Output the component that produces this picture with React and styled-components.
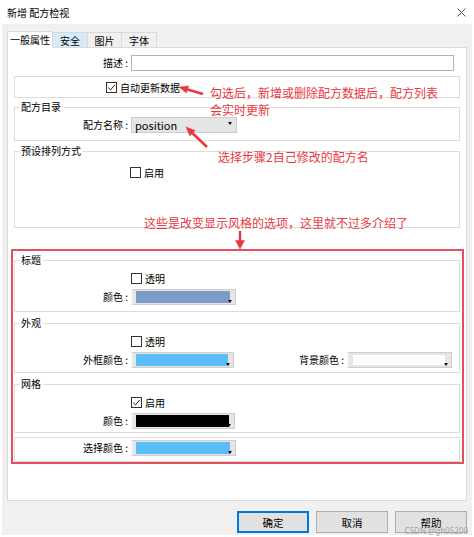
import React from 'react';
import styled, { createGlobalStyle } from 'styled-components';

const GlobalStyle = createGlobalStyle`
  html, body { margin: 0; padding: 0; background: #fff; }
  body { font-family: "Noto Sans CJK SC", "Noto Sans", sans-serif; }
  * { box-sizing: border-box; }
`;

const Window = styled.div`
  position: relative;
  width: 474px;
  height: 537px;
  background: #fff;
  display: flex;
  flex-direction: column;
  overflow: hidden;
  font-size: 10px;
  color: #000;
`;

const TitleBar = styled.div`
  flex: none;
  height: 24px;
  display: flex;
  align-items: center;
  justify-content: space-between;
  padding: 0 8px 0 7px;
  font-size: 10px;
`;

const Body = styled.div`
  flex: 1;
  margin: 0 2px 2px 2px;
  background: #f0f0f0;
  padding: 7px 5px 0 5px;
  display: flex;
  flex-direction: column;
`;

const TabStrip = styled.div`
  display: flex;
  align-items: flex-end;
  height: 16px;
`;

const Tab = styled.div`
  width: ${p => p.$w}px;
  height: ${p => (p.$active ? 17 : 15)}px;
  margin-bottom: ${p => (p.$active ? -1 : 0)}px;
  margin-left: -1px;
  position: relative;
  z-index: ${p => (p.$active ? 1 : 0)};
  display: flex;
  align-items: center;
  justify-content: center;
  padding-bottom: ${p => (p.$active ? 2 : 0)}px;
  font-size: 10px;
  background: ${p => (p.$active ? '#fff' : p.$hover ? '#d9eaf8' : '#f0f0f0')};
  border: 1px solid ${p => (p.$active ? '#dadada' : p.$hover ? '#c6dcf0' : '#d9d9d9')};
  border-bottom: none;
  &:first-child { margin-left: 0; }
`;

const Panel = styled.div`
  height: 454px;
  background: #fff;
  border: 1px solid #dadada;
  padding: 0 6px;
  display: flex;
  flex-direction: column;
`;

const Row = styled.div`
  display: flex;
  align-items: center;
  height: 16px;
  margin-top: ${p => p.$mt || 0}px;
  padding-right: ${p => p.$pr || 0}px;
`;

const Label = styled.span`
  flex: none;
  width: ${p => p.$w}px;
  padding-right: 3px;
  text-align: right;
  white-space: nowrap;
  font-size: 10px;
  line-height: 16px;
`;

const TextInput = styled.div`
  flex: 1;
  height: 16px;
  border: 1px solid #b4b4b4;
  background: #fff;
`;

const Box = styled.div`
  border: 1px solid #dcdcdc;
  margin-top: ${p => p.$mt || 0}px;
  padding: ${p => p.$pad};
`;

const Group = styled.fieldset`
  margin: ${p => p.$mt || 0}px 0 0 0;
  border: 1px solid #dcdcdc;
  padding: ${p => p.$pad};
  min-width: 0;
  display: flex;
  flex-direction: column;
  gap: 5px;
`;

const Legend = styled.legend`
  margin-left: 4px;
  padding: 0 2px;
  font-size: 10px;
  line-height: 12px;
`;

const CheckRow = styled.label`
  display: flex;
  align-items: center;
  gap: 3px;
  height: 12px;
  padding-left: ${p => p.$pl}px;
  font-size: 10px;
`;

const CheckBox = styled.span`
  width: 11px;
  height: 11px;
  border: 1px solid #333;
  background: #fff;
  display: flex;
  align-items: center;
  justify-content: center;
`;

const Combo = styled.div`
  position: relative;
  width: 106px;
  height: 16px;
  background: #e5e5e5;
  border: 1px solid #cbcbcb;
  padding-left: 3px;
  display: flex;
  align-items: center;
  font-size: 11px;
`;

const ColorCombo = styled.div`
  position: relative;
  width: ${p => p.$w || 105}px;
  height: 16px;
  background: #e6e6e6;
  border: 1px solid #cdcdcd;
  border-left: 2px solid #f4f4f4;
  padding: 1px 5px 1px 3px;
  display: flex;
`;

const Swatch = styled.div`
  flex: 1;
  background: ${p => p.$c};
  border: ${p => (p.$c === '#ffffff' ? '1px solid #e4e4e4' : 'none')};
`;

const Caret = styled.span`
  position: absolute;
  right: ${p => p.$r}px;
  bottom: ${p => p.$b}px;
  width: 0;
  height: 0;
  border-left: 2px solid transparent;
  border-right: 2px solid transparent;
  border-top: 3px solid #111;
`;

const Highlight = styled.div`
  margin: 21px -4px 0 -3px;
  border: 2px solid #e4505e;
  padding: 3px 2px 0 1px;
  display: flex;
  flex-direction: column;
`;

const Footer = styled.div`
  display: flex;
  justify-content: flex-end;
  gap: 7px;
  margin-top: 10px;
`;

const Button = styled.div`
  width: 72px;
  height: 22px;
  display: flex;
  align-items: center;
  justify-content: center;
  background: #e1e1e1;
  border: 1px solid ${p => (p.$default ? '#0078d7' : '#adadad')};
  box-shadow: ${p => (p.$default ? 'inset 0 0 0 1px #0078d7' : 'none')};
  font-size: 10.5px;
  line-height: 11px;
`;

const Overlay = styled.div`
  position: absolute;
  inset: 0;
  pointer-events: none;
`;

const Note = styled.div`
  position: absolute;
  left: ${p => p.$x}px;
  top: ${p => p.$y}px;
  color: #e8383f;
  font-size: 12px;
  line-height: 17px;
  white-space: nowrap;
`;

const Watermark = styled.div`
  position: absolute;
  right: 6px;
  top: 527px;
  font-family: "Noto Sans", sans-serif;
  font-size: 8px;
  line-height: 8px;
  color: rgba(140, 140, 140, 0.75);
  white-space: nowrap;
`;

const Check = ({ checked }) => (
  <CheckBox>
    {checked && (
      <svg width="9" height="9" viewBox="0 0 9 9">
        <path d="M1.2 4.6 L3.5 6.9 L7.9 1.8" fill="none" stroke="#222" strokeWidth="1" />
      </svg>
    )}
  </CheckBox>
);

const Checkbox = ({ checked, pl, children }) => (
  <CheckRow $pl={pl}>
    <Check checked={checked} />
    {children}
  </CheckRow>
);

const ColorPicker = ({ color, w }) => (
  <ColorCombo $w={w}>
    <Swatch $c={color} />
    <Caret $r={3} $b={1} />
  </ColorCombo>
);

const tabs = [
  { name: '一般属性', w: 46, active: true },
  { name: '安全', w: 36, hover: true },
  { name: '图片', w: 35 },
  { name: '字体', w: 36 },
];

export default function App() {
  return (
    <>
      <GlobalStyle />
      <Window>
        <TitleBar>
          <span>新增 配方检视</span>
          <svg width="9" height="9" viewBox="0 0 9 9">
            <path d="M0.5 0.5 L8.5 8.5 M8.5 0.5 L0.5 8.5" stroke="#444" strokeWidth="0.9" />
          </svg>
        </TitleBar>
        <Body>
          <TabStrip>
            {tabs.map(t => (
              <Tab key={t.name} $w={t.w} $active={t.active} $hover={t.hover}>
                {t.name}
              </Tab>
            ))}
          </TabStrip>
          <Panel>
            <Row $mt={7} $pr={6}>
              <Label $w={117}>描述 :</Label>
              <TextInput />
            </Row>

            <Box $mt={5} $pad="4px 0">
              <Checkbox checked pl={91}>自动更新数据</Checkbox>
            </Box>

            <Group $mt={3} $pad="4px 0 7px 0">
              <Legend>配方目录</Legend>
              <Row>
                <Label $w={116}>配方名称 :</Label>
                <Combo>
                  position
                  <Caret $r={4} $b={7} />
                </Combo>
              </Row>
            </Group>

            <Group $mt={4} $pad="9px 0 49px 0">
              <Legend>预设排列方式</Legend>
              <Checkbox pl={115}>启用</Checkbox>
            </Group>

            <Highlight>
              <Group $pad="6px 0 6px 0">
                <Legend>标题</Legend>
                <Checkbox pl={116}>透明</Checkbox>
                <Row>
                  <Label $w={116}>颜色 :</Label>
                  <ColorPicker color="#7a9cc6" />
                </Row>
              </Group>

              <Group $mt={5} $pad="6px 0 4px 0">
                <Legend>外观</Legend>
                <Checkbox pl={116}>透明</Checkbox>
                <Row>
                  <Label $w={116}>外框颜色 :</Label>
                  <ColorPicker color="#5abdf9" w={103} />
                  <Label $w={113}>背景颜色 :</Label>
                  <ColorPicker color="#ffffff" />
                </Row>
              </Group>

              <Group $mt={5} $pad="6px 0 3px 0">
                <Legend>网格</Legend>
                <Checkbox checked pl={116}>启用</Checkbox>
                <Row>
                  <Label $w={116}>颜色 :</Label>
                  <ColorPicker color="#000000" w={104} />
                </Row>
              </Group>

              <Box $mt={4} $pad="2px 0 5px 0">
                <Row>
                  <Label $w={116}>选择颜色 :</Label>
                  <ColorPicker color="#5abdf9" />
                </Row>
              </Box>
            </Highlight>
          </Panel>

          <Footer>
            <Button $default>确定</Button>
            <Button>取消</Button>
            <Button>帮助</Button>
          </Footer>
        </Body>

        <Overlay>
          <svg width="474" height="537" viewBox="0 0 474 537">
            <g fill="#e8383f" stroke="#e8383f">
              <line x1="203" y1="94" x2="187.6" y2="89.5" strokeWidth="2.6" />
              <polygon points="179,87 188.8,85.9 186.4,93.1" strokeWidth="0.5" />
              <line x1="207" y1="147" x2="192.5" y2="133.2" strokeWidth="2.6" />
              <polygon points="186,127 195.1,130.5 189.9,135.9" strokeWidth="0.5" />
              <line x1="240" y1="231" x2="240" y2="241" strokeWidth="2.4" />
              <polygon points="240,249 235.5,240.5 244.5,240.5" strokeWidth="0.5" />
            </g>
          </svg>
          <Note $x={210} $y={84}>
            勾选后，新增或删除配方数据后，配方列表
            <br />
            会实时更新
          </Note>
          <Note $x={218} $y={148}>选择步骤2自己修改的配方名</Note>
          <Note $x={144} $y={214}>这些是改变显示风格的选项，这里就不过多介绍了</Note>
          <Watermark>CSDN @gh05200</Watermark>
        </Overlay>
      </Window>
    </>
  );
}
